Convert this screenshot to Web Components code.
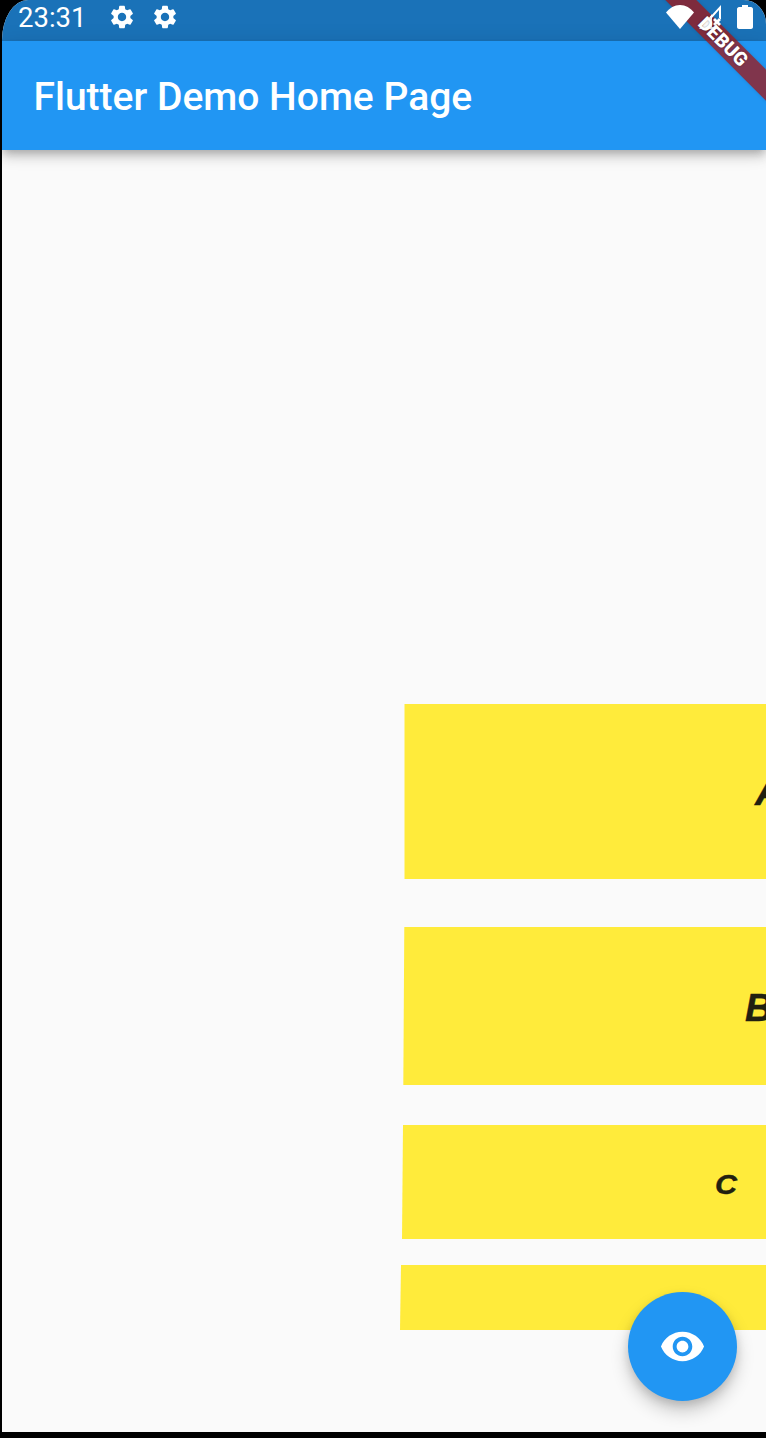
<!DOCTYPE html>
<html>
<head>
<meta charset="utf-8">
<title>Flutter Demo Home Page</title>
<style>
  html, body { margin: 0; height: 100%; background: #000; overflow: hidden; }
  body { font-family: Roboto, "Liberation Sans", sans-serif; }
</style>
</head>
<body>
<phone-frame>
  <status-bar time="23:31"></status-bar>
  <app-bar>Flutter Demo Home Page</app-bar>
  <demo-body>
    <skew-panel h="175" top="6.5" bottom="6.5" mb="48" size="41" pad="357">A</skew-panel>
    <skew-panel h="158" top="6.3" bottom="5.3" mb="40" size="38" pad="347" dy="2">B</skew-panel>
    <skew-panel h="114" top="5" bottom="4" mb="26" size="27" sx="1.13" pad="317" dy="3">C</skew-panel>
    <skew-panel h="65" top="3" bottom="2"></skew-panel>
  </demo-body>
  <eye-fab></eye-fab>
  <debug-banner></debug-banner>
</phone-frame>

<script>
const ICONS = {
  gear: "M19.14 12.94c.04-.3.06-.61.06-.94 0-.32-.02-.64-.07-.94l2.03-1.58a.49.49 0 0 0 .12-.61l-1.92-3.32a.49.49 0 0 0-.59-.22l-2.39.96c-.5-.38-1.03-.7-1.62-.94l-.36-2.54a.48.48 0 0 0-.48-.41h-3.84c-.24 0-.43.17-.47.41l-.36 2.54c-.59.24-1.13.57-1.62.94l-2.39-.96c-.22-.08-.47 0-.59.22L2.74 8.87c-.12.21-.08.47.12.61l2.03 1.58c-.05.3-.09.63-.09.94s.02.64.07.94l-2.03 1.58a.49.49 0 0 0-.12.61l1.92 3.32c.12.22.37.29.59.22l2.39-.96c.5.38 1.03.7 1.62.94l.36 2.54c.05.24.24.41.48.41h3.84c.24 0 .44-.17.47-.41l.36-2.54c.59-.24 1.13-.56 1.62-.94l2.39.96c.22.08.47 0 .59-.22l1.92-3.32c.12-.22.07-.47-.12-.61l-2.01-1.58zM12 15.6c-1.98 0-3.6-1.62-3.6-3.6s1.62-3.6 3.6-3.6 3.6 1.62 3.6 3.6-1.62 3.6-3.6 3.6z",
  eye: "M12 4.5C7 4.5 2.73 7.61 1 12c1.73 4.39 6 7.5 11 7.5s9.27-3.11 11-7.5c-1.73-4.39-6-7.5-11-7.5zM12 17c-2.76 0-5-2.24-5-5s2.24-5 5-5 5 2.24 5 5-2.24 5-5 5zm0-8c-1.66 0-3 1.34-3 3s1.34 3 3 3 3-1.34 3-3-1.34-3-3-3z"
};

class PhoneFrame extends HTMLElement {
  constructor() {
    super();
    this.attachShadow({ mode: "open" }).innerHTML = `
    <style>
    :host {
      display: flex;
      flex-direction: column;
      position: relative;
      box-sizing: border-box;
      margin-left: 2px;
      width: 764px;
      height: 1432px;
      background: #fafafa;
      overflow: hidden;
      border-top-left-radius: 26px 40px;
      border-top-right-radius: 22px 24px;
    }
    </style>
    <slot></slot>`;
  }
}

class StatusBar extends HTMLElement {
  constructor() {
    super();
    this.attachShadow({ mode: "open" }).innerHTML = `
    <style>
    :host {
      display: flex;
      align-items: center;
      flex: none;
      height: 41px;
      padding: 0 13px 0 16px;
      background: #1a72b8;
      color: #fff;
    }
    .time { font: 400 27.5px/1 Roboto, sans-serif; margin-top: -6px; width: 89.5px; }
    .gear { width: 28px; height: 28px; margin: -7px 15px 0 0; fill: #fff; }
    .right { position: relative; z-index: 4; margin-left: auto; display: flex; align-items: flex-start; margin-top: -7px; }
    svg { display: block; fill: #fff; }
    </style>
    <span class="time"></span>
    <svg class="gear" viewBox="0 0 24 24"><path d="${ICONS.gear}"/></svg>
    <svg class="gear" viewBox="0 0 24 24"><path d="${ICONS.gear}"/></svg>
    <div class="right">
      <svg width="28" height="24" viewBox="0 0 28 24"><path d="M0 7.5C3.5 3 8.5 0 14 0s10.5 3 14 7.5L14 24z"/></svg>
      <svg width="23" height="24" viewBox="0 0 23 24" style="margin:0 15px 0 5px"><path fill-rule="evenodd" d="M22 0v14h-2V5L5 22h11v2H0zM14 15l2-2 2 2 2-2 2 2-2 2 2 2-2 2-2-2-2 2-2-2 2-2z"/><path d="M13 9v13H3z"/></svg>
      <svg width="16" height="24" viewBox="0 0 16 24"><path d="M5 0h6v2h3c1 0 2 1 2 2v18c0 1-1 2-2 2H2c-1 0-2-1-2-2V4c0-1 1-2 2-2h3z"/></svg>
    </div>`;
    this.shadowRoot.querySelector(".time").textContent = this.getAttribute("time");
  }
}

class AppBar extends HTMLElement {
  constructor() {
    super();
    this.attachShadow({ mode: "open" }).innerHTML = `
    <style>
    :host {
      display: flex;
      align-items: center;
      flex: none;
      position: relative;
      z-index: 1;
      height: 109px;
      padding: 3px 0 0 31.5px;
      box-sizing: border-box;
      background: #2196f3;
      color: #fff;
      font: 500 39px/1 Roboto, sans-serif;
      box-shadow: 0 4px 8px -2px rgba(0,0,0,.2), 0 8px 10px rgba(0,0,0,.12), 0 2px 20px rgba(0,0,0,.1);
    }
    </style>
    <slot></slot>`;
  }
}

class DemoBody extends HTMLElement {
  constructor() {
    super();
    this.attachShadow({ mode: "open" }).innerHTML = `
    <style>
    :host {
      display: flex;
      flex-direction: column;
      flex: 1;
      min-height: 0;
      padding: 554px 0 0 396px;
      overflow: hidden;
    }
    </style>
    <slot></slot>`;
  }
}

class SkewPanel extends HTMLElement {
  constructor() {
    super();
    const a = name => this.getAttribute(name) || 0;
    this.attachShadow({ mode: "open" }).innerHTML = `
    <style>
    :host {
      display: flex;
      align-items: center;
      flex: none;
      height: ${a("h")}px;
      margin-bottom: ${a("mb")}px;
      padding-left: ${a("pad")}px;
      background: #ffeb3b;
      clip-path: polygon(${a("top")}px 0, 100% 0, 100% 100%, ${a("bottom")}px 100%);
      color: #212010;
      font: italic 700 ${a("size")}px/1 "Liberation Sans", Arial, sans-serif;
      -webkit-text-stroke: .4px #212010;
      white-space: nowrap;
    }
    span {
      display: inline-block;
      transform-origin: left center;
      transform: translateY(${a("dy")}px) scaleX(${a("sx") || 1});
    }
    </style>
    <span><slot></slot></span>`;
  }
}

class EyeFab extends HTMLElement {
  constructor() {
    super();
    this.attachShadow({ mode: "open" }).innerHTML = `
    <style>
    :host {
      position: absolute;
      left: 626px;
      top: 1292px;
      z-index: 2;
      display: flex;
      align-items: center;
      justify-content: center;
      width: 109px;
      height: 109px;
      border-radius: 50%;
      background: #2196f3;
      box-shadow: 0 10px 18px rgba(0,0,0,.2), 0 4px 8px rgba(0,0,0,.12);
    }
    svg { width: 47px; height: 47px; fill: #fff; display: block; }
    </style>
    <svg viewBox="0 0 24 24"><path d="${ICONS.eye}"/></svg>`;
  }
}

class DebugBanner extends HTMLElement {
  constructor() {
    super();
    this.attachShadow({ mode: "open" }).innerHTML = `
    <style>
    :host { position: absolute; left: 601px; top: 31px; width: 240px; height: 21.5px; }
    /* band sits under the status icons, label above them */
    .band, .label {
      position: absolute;
      inset: 0;
      display: flex;
      align-items: center;
      justify-content: center;
      transform: rotate(45deg);
    }
    .band { z-index: 3; background: rgba(160,20,20,.75); box-shadow: 0 0 4px rgba(0,0,0,.12); }
    .label {
      z-index: 5;
      color: #fff;
      font: 900 19px/1 Roboto, sans-serif;
      text-shadow: 0 0 2px rgba(0,0,0,.4);
    }
    </style>
    <div class="band"></div>
    <div class="label">DEBUG</div>`;
  }
}

customElements.define("phone-frame", PhoneFrame);
customElements.define("status-bar", StatusBar);
customElements.define("app-bar", AppBar);
customElements.define("demo-body", DemoBody);
customElements.define("skew-panel", SkewPanel);
customElements.define("eye-fab", EyeFab);
customElements.define("debug-banner", DebugBanner);
</script>
</body>
</html>
